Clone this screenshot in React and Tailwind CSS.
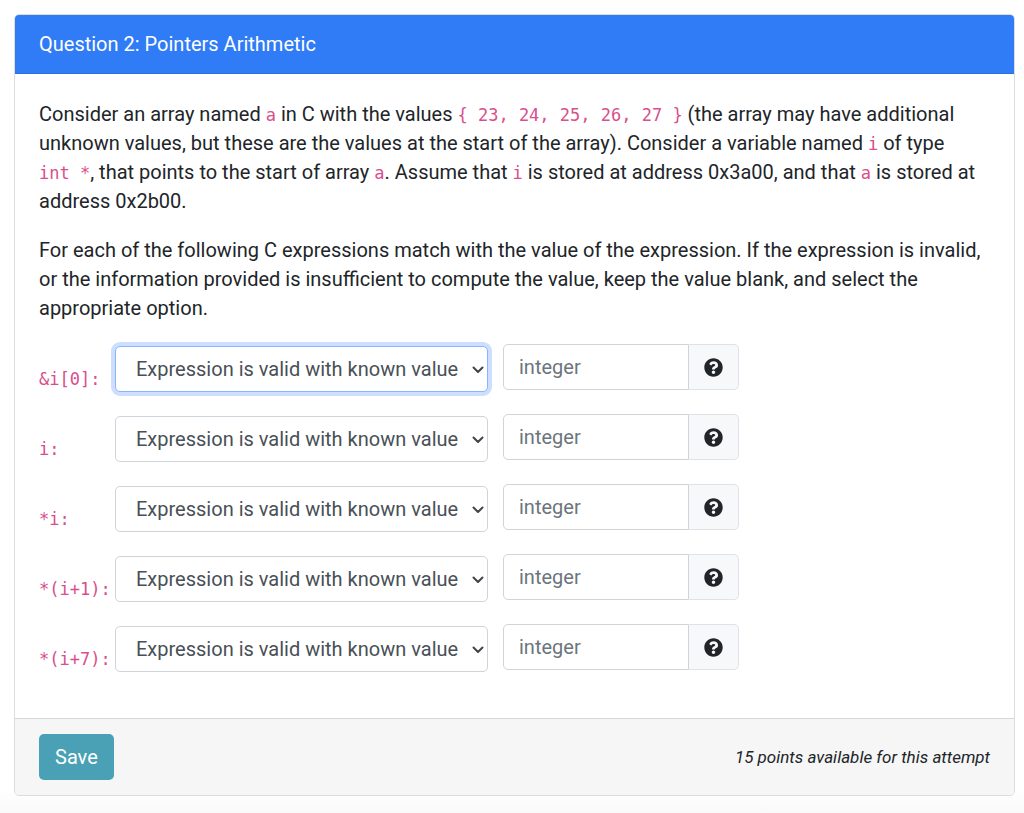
import React, { useState } from 'react';
import { FaQuestionCircle } from 'react-icons/fa';

const EXPRESSIONS = ['&i[0]', 'i', '*i', '*(i+1)', '*(i+7)'];

const OPTIONS = [
  'Expression is valid with known value',
  'Expression is valid with unknown value',
  'Expression is invalid',
];

function Code({ children }) {
  return (
    <code className="whitespace-nowrap font-['DejaVu_Sans_Mono',monospace] text-[17px] leading-none text-[#d94f8c]">
      {children}
    </code>
  );
}

function ExpressionRow({ expression, index }) {
  const [status, setStatus] = useState(OPTIONS[0]);
  const [value, setValue] = useState('');

  return (
    <div className="flex items-start">
      <label
        htmlFor={`status-${index}`}
        className="w-[76px] shrink-0 whitespace-nowrap pt-[21px] font-['DejaVu_Sans_Mono',monospace] text-[17px] leading-7 text-[#d94f8c]"
      >
        {expression}:
      </label>
      <div className="relative mt-0.5 w-[373px]">
        <select
          id={`status-${index}`}
          value={status}
          onChange={(e) => setStatus(e.target.value)}
          autoFocus={index === 0}
          className="block h-[46px] w-full appearance-none rounded-[5px] border border-[#ced4da] bg-white pr-6 pl-5 text-[20px] text-[#495057] outline-none focus:border-[#86b7fa] focus:ring-4 focus:ring-[#cddefe]"
        >
          {OPTIONS.map((option) => (
            <option key={option}>{option}</option>
          ))}
        </select>
        <svg
          viewBox="0 0 12 8"
          className="pointer-events-none absolute top-5 right-1 h-2 w-3"
          fill="none"
          stroke="#40464c"
          strokeWidth="2"
          strokeLinecap="round"
          strokeLinejoin="round"
        >
          <path d="M1.5 1.5 6 6l4.5-4.5" />
        </svg>
      </div>
      <div className="ml-[15px] flex h-[46px]">
        <input
          type="text"
          aria-label={`Value of ${expression}`}
          placeholder="integer"
          value={value}
          onChange={(e) => setValue(e.target.value)}
          className="w-[186px] rounded-l-[5px] border border-[#ced4da] px-[15px] text-[20px] text-[#495057] outline-none placeholder:text-[#6c757d]"
        />
        <button
          type="button"
          aria-label="Help"
          className="flex w-[50px] items-center justify-center rounded-r-[5px] border border-l-0 border-[#dfe2e6] bg-[#f7f8fa] text-[#212529]"
        >
          <FaQuestionCircle size={19} />
        </button>
      </div>
    </div>
  );
}

export default function App() {
  return (
    <main className="min-h-screen bg-linear-to-b from-white from-97% to-[#fafafa] py-[14px] pr-[9px] pl-[14px] font-['Roboto',sans-serif] text-[20px] leading-[29px] text-[#212529]">
      <form
        onSubmit={(e) => e.preventDefault()}
        className="overflow-hidden rounded-[5px] border border-[#dcdcdc] bg-white"
      >
        <h1 className="border-b border-[#2b6fdd] bg-[#307bf6] px-6 pt-[15px] pb-[14px] text-white">
          Question 2: Pointers Arithmetic
        </h1>

        <div className="px-6 pt-[26px] pb-[45px]">
          <p className="mb-5">
            Consider an array named <Code>a</Code> in C with the values <Code>{'{ 23, 24, 25, 26, 27 }'}</Code> (the
            array may have additional unknown values, but these are the values at the start of the array). Consider a
            variable named <Code>i</Code> of type <Code>int *</Code>, that points to the start of array <Code>a</Code>.
            Assume that <Code>i</Code> is stored at address 0x3a00, and that <Code>a</Code> is stored at address 0x2b00.
          </p>
          <p className="mb-[21px]">
            For each of the following C expressions match with the value of the expression. If the expression is
            invalid, or the information provided is insufficient to compute the value, keep the value blank, and select
            the appropriate option.
          </p>
          <div className="flex flex-col gap-[21px]">
            {EXPRESSIONS.map((expression, index) => (
              <ExpressionRow key={expression} expression={expression} index={index} />
            ))}
          </div>
        </div>

        <div className="flex items-center justify-between border-t border-[#d8d8d8] bg-[#f6f6f6] px-6 py-[15px]">
          <button type="submit" className="h-[46px] rounded-[5px] bg-[#4aa0b5] px-4 text-white">
            Save
          </button>
          <em className="text-[17px]">15 points available for this attempt</em>
        </div>
      </form>
    </main>
  );
}
